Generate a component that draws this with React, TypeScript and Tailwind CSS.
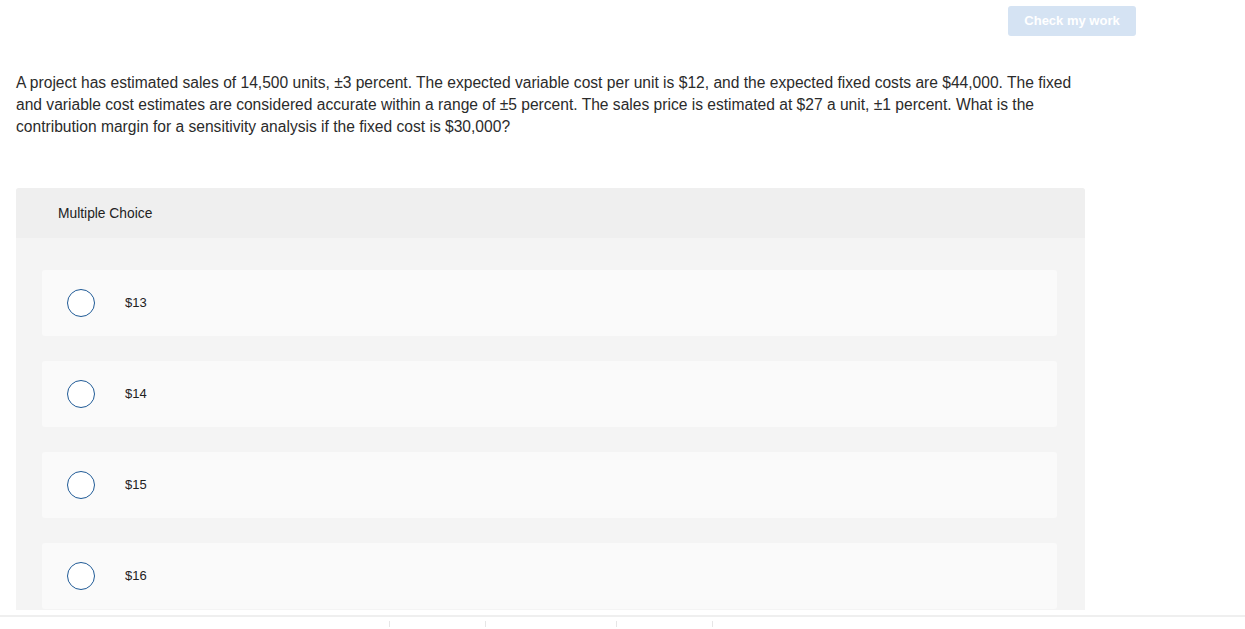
import React from "react";

const choices = ["$13", "$14", "$15", "$16"];

export default function App(): JSX.Element {
  return (
    <div className="relative w-full h-[629px] overflow-hidden bg-white font-['Liberation_Sans',Arial,sans-serif] text-[#333]">
      <header className="flex justify-end pt-[6px] pr-[109px]">
        <button className="w-[128px] h-[30px] rounded-[3px] bg-[#d5e3f3] text-white text-[13px] font-bold">
          Check my work
        </button>
      </header>

      <main className="pl-[16px]">
        <p className="mt-[36px] w-[1072px] text-[15.6px] leading-[22px] text-[#2b2b2b]">
          A project has estimated sales of 14,500 units, ±3 percent. The expected variable cost per unit is $12, and the
          expected fixed costs are $44,000. The fixed and variable cost estimates are considered accurate within a range of
          ±5 percent. The sales price is estimated at $27 a unit, ±1 percent. What is the contribution margin for a
          sensitivity analysis if the fixed cost is $30,000?
        </p>

        <section
          aria-label="multiple choice"
          className="mt-[50px] w-[1069px] h-[422px] overflow-hidden rounded-t-[3px] bg-[#f4f4f4]"
        >
          <div className="h-[50px] flex items-center pl-[42px] pt-[2px] bg-[#efefef] text-[13.8px] text-[#222]">
            Multiple Choice
          </div>
          <div className="flex flex-col gap-[25px] pl-[26px] pr-[28px] pt-[32px]">
            {choices.map((c) => (
              <div key={c} className="h-[66px] shrink-0 flex items-center rounded-[3px] bg-[#fafafa]">
                <span className="ml-[25px] w-[28px] h-[28px] rounded-full border-[1.5px] border-[#1f5a96] bg-white" />
                <span className="ml-[30px] text-[13px] text-[#222]">{c}</span>
              </div>
            ))}
          </div>
        </section>
      </main>

      <footer className="mt-[5px] border-t-2 border-[#efefef]">
        <div className="flex h-[10px] pt-[4px]">
          <div className="ml-[389px] w-px h-full bg-[#e6e6e6]" />
          <div className="ml-[95px] w-px h-full bg-[#e6e6e6]" />
          <div className="ml-[130px] w-px h-full bg-[#e6e6e6]" />
          <div className="ml-[95px] w-px h-full bg-[#e6e6e6]" />
        </div>
      </footer>
    </div>
  );
}
